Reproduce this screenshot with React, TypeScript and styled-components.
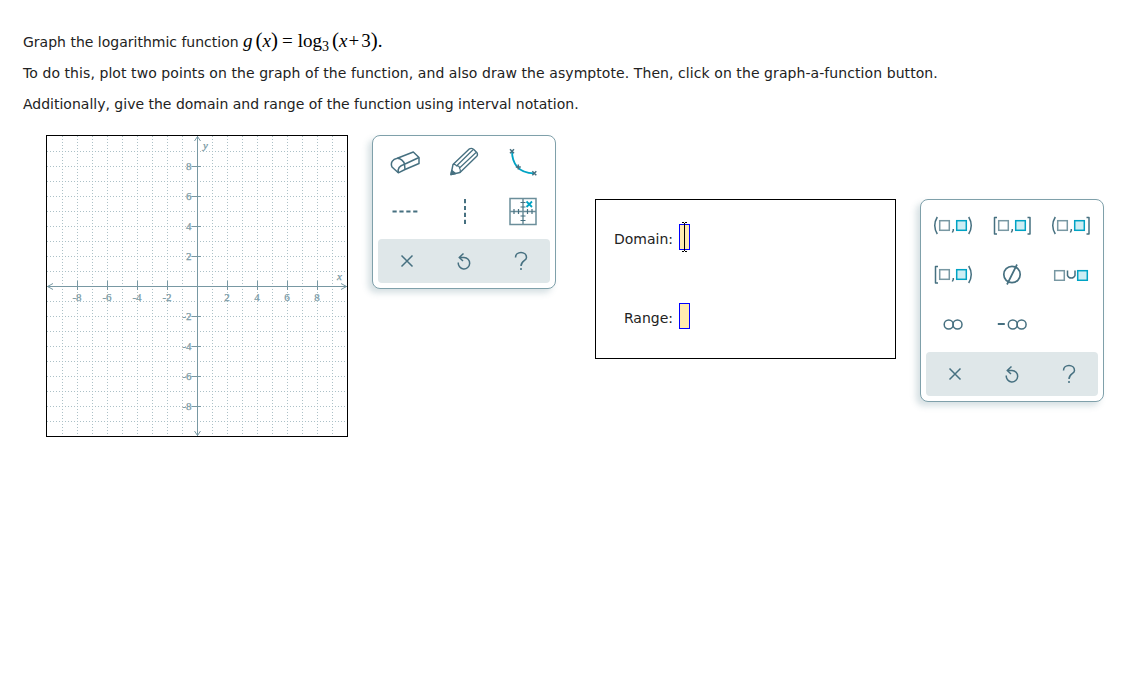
import type { ReactNode } from 'react';
import styled, { createGlobalStyle } from 'styled-components';

const colors = {
  ink: '#467080',
  line: '#7fa0aa',
  axis: '#7898a3',
  dots: '#abc0c7',
  accent: '#00a3c4',
  accentFill: '#cdeef4',
  footer: '#dfe7e9',
};

const GlobalStyle = createGlobalStyle`
  * {
    box-sizing: border-box;
  }

  body {
    margin: 0;
    background-color: #fff;
    color: #222;
    font-family: 'DejaVu Sans', Verdana, sans-serif;
    font-size: 14px;
  }

  svg {
    display: block;
  }
`;

const Page = styled.main`
  width: 1129px;
  height: 690px;
  padding: 27px 23px 0;
  overflow: hidden;
`;

const Line = styled.p<{ $spacing?: number }>`
  margin: 0;
  height: 31px;
  line-height: 31px;
  white-space: nowrap;
  letter-spacing: ${({ $spacing = 0 }) => $spacing}px;
`;

const Math = styled.span`
  color: #000;
  font-family: 'Liberation Serif', 'Times New Roman', serif;
  font-size: 19px;
  line-height: 1;
  letter-spacing: 0;
`;

const Paren = styled.span`
  font-size: 21px;
`;

const Sub = styled.sub`
  font-size: 14px;
  line-height: 0;
  vertical-align: -4px;
`;

const Gap = styled.span<{ $w: number }>`
  display: inline-block;
  width: ${({ $w }) => $w}px;
`;

const Workspace = styled.div`
  display: flex;
  align-items: flex-start;
  padding: 15px 0 0 23px;
`;

const Graph = styled.div`
  width: 302px;
  height: 302px;
  border: 1px solid #000;

  text {
    fill: ${colors.axis};
    stroke: ${colors.axis};
    stroke-width: 0.25px;
    font-family: 'Liberation Serif', serif;
    font-size: 11px;
  }
`;

const Panel = styled.section`
  width: 184px;
  padding: 1px 5px 5px;
  border: 1px solid ${colors.line};
  border-radius: 8px;
  background-color: #fff;
  box-shadow: -4px 4px 6px rgba(70, 112, 128, 0.22);
`;

const GraphTools = styled(Panel)`
  margin-left: 24px;
`;

const AnswerTools = styled(Panel)`
  margin: 64px 0 0 24px;
`;

const Keys = styled.div`
  display: grid;
  grid-template-columns: 54px 64px 54px;
  grid-auto-rows: 49px;
  padding-bottom: 4px;
`;

const Key = styled.button`
  display: flex;
  align-items: center;
  justify-content: center;
  padding: 0;
  border: 0;
  background: none;
  color: ${colors.ink};
`;

const Footer = styled.div`
  display: grid;
  grid-template-columns: 57px 57px 58px;
  height: 44px;
  border-radius: 4px;
  background-color: ${colors.footer};
`;

const AnswerBox = styled.section`
  width: 301px;
  height: 160px;
  margin: 64px 0 0 39px;
  padding: 21px 0 0 17px;
  border: 1px solid #000;
`;

const Field = styled.div`
  display: flex;
  align-items: center;
  height: 32px;
  margin-bottom: 47px;
`;

const Label = styled.span`
  width: 60px;
  padding-top: 4px;
  text-align: right;
  white-space: nowrap;
`;

const Input = styled.span`
  display: flex;
  justify-content: center;
  width: 11px;
  height: 26px;
  margin-left: 6px;
  border: 1px solid #00f;
  background-color: #ffebaf;
`;

const Caret = styled.svg`
  flex: none;
  width: 5px;
  height: 30px;
  margin-top: -3px;
`;

const ticks = [-8, -6, -4, -2, 2, 4, 6, 8];
const gridLines = Array.from({ length: 19 }, (_, i) => (i - 9) * 15 + 150.5);

const CoordinatePlane = () => (
  <Graph>
    <svg width="300" height="300" viewBox="0 0 300 300">
      <g stroke={colors.dots} strokeDasharray="1 2">
        {gridLines.map(p => (
          <g key={p}>
            <path d={`M${p} 0V300`} />
            <path d={`M0 ${p}H300`} />
          </g>
        ))}
      </g>
      <g stroke={colors.axis} fill="none">
        <path d="M150.5 0V300M0 150.5H300" />
        <path d="M147.5 5L150.5 .5L153.5 5M147.5 295L150.5 299.5L153.5 295M6 147.5L.5 150.5L6 153.5M294 147.5L299.5 150.5L294 153.5" />
        {ticks.map(t => (
          <path key={t} d={`M${150.5 + t * 15} 145v9M145 ${150.5 - t * 15}h9`} />
        ))}
      </g>
      {ticks.map(t => (
        <g key={t}>
          <text x={150 + t * 15} y="165" textAnchor="middle">{t}</text>
          <text x="144.500" y={154 - t * 15} textAnchor="end">{t}</text>
        </g>
      ))}
      <text x="156" y="13" fontStyle="italic">y</text>
      <text x="290" y="144" fontStyle="italic">x</text>
    </svg>
  </Graph>
);

const Icon = ({ w, h, children }: { w: number; h: number; children: ReactNode }) => (
  <svg
    width={w}
    height={h}
    viewBox={`0 0 ${w} ${h}`}
    fill="none"
    stroke={colors.ink}
    strokeWidth="1.5"
    strokeLinejoin="round"
  >
    {children}
  </svg>
);

const EraserIcon = () => (
  <Icon w={30} h={25}>
    <path d="M8.300 23.800L2 18C.2 14 2.500 10 7.300 9.300L23.300 3L29 8.500V14.500L15 20.500Z" />
    <path d="M7.300 9.300C10.500 9.500 14 12 14.500 15.300L15 20.500M14.500 15.300L29 8.500M8.300 23.800C7.500 19.500 10 16.500 14.500 15.300" />
  </Icon>
);

const PencilIcon = () => (
  <Icon w={30} h={29}>
    <path d="M2 27.500L4 17.500L20.500 1.800Q22.500 .8 24.500 2.200L27.800 5.500Q29 7.300 28 9L11 25.500Z" strokeWidth="1.400" />
    <path d="M4 17.500Q6.500 16.800 7.500 19Q10.500 18.500 10.500 21Q12 23 11 25.500M7.500 19L24 2.800M10.500 21L27 5.500" strokeWidth="1.200" />
    <path d="M2.800 23.500L6.500 26.500L2 27.500Z" fill={colors.ink} />
  </Icon>
);

const CurveIcon = () => (
  <Icon w={28} h={29}>
    <path d="M3 4C3 16 9 26 25 26.300" stroke={colors.accent} strokeWidth="1.8" />
    <path d="M1 2.300l4 4m0-4l-4 4M9.300 17.500v5M6.800 20h5M23.300 24.300l4 4m0-4l-4 4" />
  </Icon>
);

const PlotIcon = () => (
  <Icon w={28} h={31}>
    <g transform="translate(0 2.5)">
      <path d="M1 1H27V27H1ZM14 1V27M1 14H27" stroke="#6b8e9a" strokeLinejoin="miter" />
      <path
        d="M5 11.500v5M9.500 11.500v5M18.500 11.500v5M23 11.500v5M11.500 5h5M11.500 9.500h5M11.500 18.500h5M11.500 23h5"
        strokeWidth="1.2"
      />
      <path d="M17.500 4l5.500 5.500m0-5.500l-5.500 5.500" stroke={colors.accent} strokeWidth="1.800" />
    </g>
  </Icon>
);

const ControlKeys = () => (
  <Footer>
    <Key aria-label="Clear">
      <Icon w={14} h={14}><path d="M1.500 1.500L12.500 12.500M12.500 1.500L1.500 12.500" /></Icon>
    </Key>
    <Key aria-label="Undo">
      <Icon w={14} h={18}>
        <path d="M1.300 10.500A5.700 5.700 0 1 0 7 5.500H2.500M6.500 1.500L2.200 5.500L6 9" />
      </Icon>
    </Key>
    <Key aria-label="Help">
      <Icon w={14} h={20}>
        <path d="M1.500 6.500C1.500 3.500 4 1.500 7 1.500S12.500 3.500 12.500 6.500C12.500 10 7 9.500 7 15M7 17v2" />
      </Icon>
    </Key>
  </Footer>
);

const Box = ({ x, y = 4, filled = false }: { x: number; y?: number; filled?: boolean }) => (
  <rect
    x={x + 0.7}
    y={y + 0.7}
    width="9.600"
    height="9.600"
    fill={filled ? colors.accentFill : 'none'}
    stroke={filled ? colors.accent : colors.axis}
    strokeWidth="1.500"
    strokeLinejoin="miter"
  />
);

const brackets: Record<string, string> = {
  '(': 'M4.300 1Q-.8 9.500 4.300 18',
  '[': 'M5 1.500H2.500V18H5',
  ')': 'M35.700 1Q40.800 9.500 35.700 18',
  ']': 'M35.500 1.500H38V18H35.500',
};

const Interval = ({ open, close }: { open: string; close: string }) => (
  <Icon w={40} h={19}>
    <path d={brackets[open]} />
    <Box x={6} />
    <path d="M20.300 13v1.500l-1 2" />
    <Box x={23} filled />
    <path d={brackets[close]} />
  </Icon>
);

const App = () => (
  <>
    <GlobalStyle />
    <Page>
      <Line>
        Graph the logarithmic function{' '}
        <Math>
          <i>g</i><Gap $w={3} /><Paren>(</Paren><i>x</i><Paren>)</Paren>
          <Gap $w={4} />=<Gap $w={5} />log<Sub>3</Sub><Gap $w={3} />
          <Paren>(</Paren><i>x</i><Gap $w={1} />+<Gap $w={2} />3<Paren>)</Paren>.
        </Math>
      </Line>
      <Line $spacing={0.075}>
        To do this, plot two points on the graph of the function, and also draw the asymptote. Then, click on the graph-a-function button.
      </Line>
      <Line>
        Additionally, give the domain and range of the function using interval notation.
      </Line>

      <Workspace>
        <CoordinatePlane />

        <GraphTools>
          <Keys>
            <Key aria-label="Eraser"><EraserIcon /></Key>
            <Key aria-label="Pencil"><PencilIcon /></Key>
            <Key aria-label="Graph a function"><CurveIcon /></Key>
            <Key aria-label="Horizontal asymptote">
              <Icon w={26} h={4}>
                <path d="M.5 2.500H26" strokeWidth="2" strokeDasharray="4.200 2.700" />
              </Icon>
            </Key>
            <Key aria-label="Vertical asymptote">
              <Icon w={3} h={29}>
                <path d="M2 3V29" strokeWidth="2" strokeDasharray="4.200 2.700" />
              </Icon>
            </Key>
            <Key aria-label="Plot a point"><PlotIcon /></Key>
          </Keys>
          <ControlKeys />
        </GraphTools>

        <AnswerBox>
          <Field>
            <Label>Domain:</Label>
            <Input>
              <Caret viewBox="0 0 5 30" stroke="#000">
                <path d="M2.500 1V29M0 .5h2m1 0h2M0 29.500h2m1 0h2" />
              </Caret>
            </Input>
          </Field>
          <Field>
            <Label>Range:</Label>
            <Input />
          </Field>
        </AnswerBox>

        <AnswerTools>
          <Keys>
            <Key><Interval open="(" close=")" /></Key>
            <Key><Interval open="[" close="]" /></Key>
            <Key><Interval open="(" close="]" /></Key>
            <Key><Interval open="[" close=")" /></Key>
            <Key aria-label="Empty set">
              <Icon w={20} h={21}>
                <circle cx="10" cy="10.500" r="8.200" strokeWidth="1.700" />
                <path d="M5 20.500L15 .5" strokeWidth="1.700" />
              </Icon>
            </Key>
            <Key aria-label="Union">
              <Icon w={36} h={13}>
                <Box x={1} y={2} />
                <path d="M14.500 2.500V7.500A4 4 0 0 0 22 7.500V2.500" />
                <Box x={24} y={2} filled />
              </Icon>
            </Key>
            <Key aria-label="Infinity">
              <Icon w={20} h={12}>
                <circle cx="5.700" cy="6.500" r="4.500" />
                <circle cx="14.500" cy="6.500" r="4.500" />
              </Icon>
            </Key>
            <Key aria-label="Negative infinity">
              <Icon w={30} h={12}>
                <path d="M.8 6H7.800" strokeWidth="2" />
                <circle cx="15.800" cy="6.500" r="4.500" />
                <circle cx="24.600" cy="6.500" r="4.500" />
              </Icon>
            </Key>
          </Keys>
          <ControlKeys />
        </AnswerTools>
      </Workspace>
    </Page>
  </>
);

export default App;
